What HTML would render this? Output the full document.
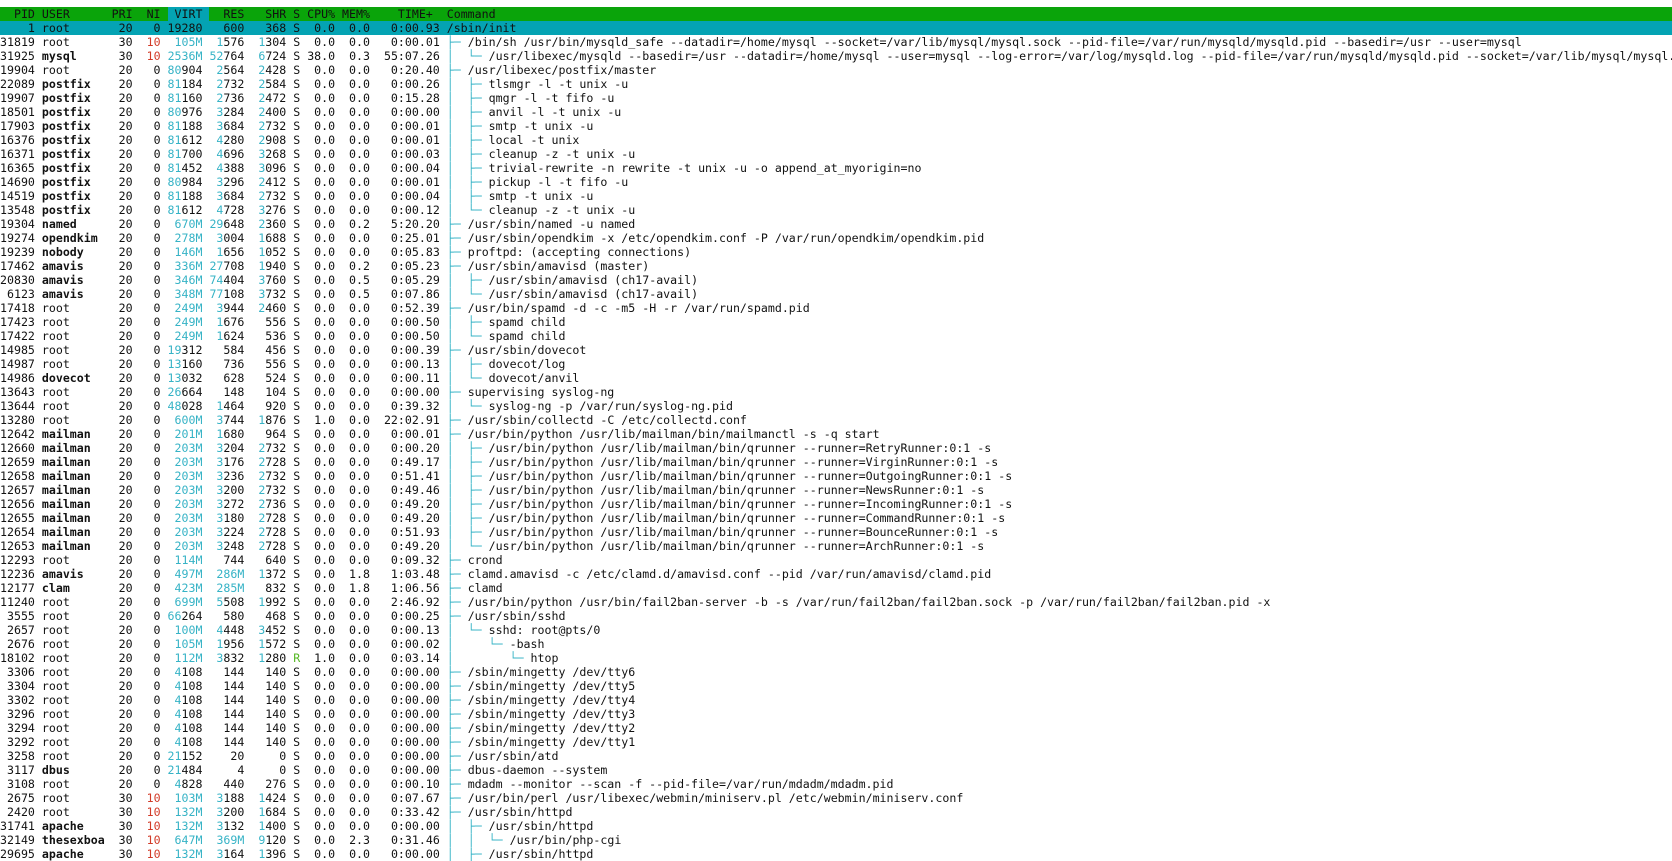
<!DOCTYPE html>
<html><head><meta charset="utf-8"><style>
html,body{margin:0;padding:0;background:#fff;width:1672px;height:853px;overflow:hidden}
#w{position:absolute;top:7px;left:0;width:1672px;font-family:"DejaVu Sans Mono","Liberation Mono",monospace;font-size:11.6px;color:#111}
#w div{height:14px;line-height:14px;white-space:pre;padding-left:0;overflow:hidden}
i{font-style:normal;color:#36b3c6}
em{font-style:normal;color:#d23b28}
.g{color:#56b824}
b{font-weight:bold}
.hd{background:#0aa40a}
.hv{background:#04a3b3}
.sel{background:#04a3b3}
</style></head><body><div id="w">
<div class="hd">  PID USER      PRI  NI <span class="hv"> VIRT </span>  RES   SHR S CPU% MEM%    TIME+  Command</div>
<div class="sel">    1 root       20   0 19280   600   368 S  0.0  0.0   0:00.93 /sbin/init</div>
<div>31819 root       30  <em>10</em>  <i>105M</i>  <i>1</i>576  <i>1</i>304 S  0.0  0.0   0:00.01 <i>├─</i> /bin/sh /usr/bin/mysqld_safe --datadir=/home/mysql --socket=/var/lib/mysql/mysql.sock --pid-file=/var/run/mysqld/mysqld.pid --basedir=/usr --user=mysql</div>
<div>31925 <b>mysql</b>      30  <em>10</em> <i>2536M</i> <i>52</i>764  <i>6</i>724 S 38.0  0.3  55:07.26 <i>│  └─</i> /usr/libexec/mysqld --basedir=/usr --datadir=/home/mysql --user=mysql --log-error=/var/log/mysqld.log --pid-file=/var/run/mysqld/mysqld.pid --socket=/var/lib/mysql/mysql.sock</div>
<div>19904 root       20   0 <i>80</i>904  <i>2</i>564  <i>2</i>428 S  0.0  0.0   0:20.40 <i>├─</i> /usr/libexec/postfix/master</div>
<div>22089 <b>postfix</b>    20   0 <i>81</i>184  <i>2</i>732  <i>2</i>584 S  0.0  0.0   0:00.26 <i>│  ├─</i> tlsmgr -l -t unix -u</div>
<div>19907 <b>postfix</b>    20   0 <i>81</i>160  <i>2</i>736  <i>2</i>472 S  0.0  0.0   0:15.28 <i>│  ├─</i> qmgr -l -t fifo -u</div>
<div>18501 <b>postfix</b>    20   0 <i>80</i>976  <i>3</i>284  <i>2</i>400 S  0.0  0.0   0:00.00 <i>│  ├─</i> anvil -l -t unix -u</div>
<div>17903 <b>postfix</b>    20   0 <i>81</i>188  <i>3</i>684  <i>2</i>732 S  0.0  0.0   0:00.01 <i>│  ├─</i> smtp -t unix -u</div>
<div>16376 <b>postfix</b>    20   0 <i>81</i>612  <i>4</i>280  <i>2</i>908 S  0.0  0.0   0:00.01 <i>│  ├─</i> local -t unix</div>
<div>16371 <b>postfix</b>    20   0 <i>81</i>700  <i>4</i>696  <i>3</i>268 S  0.0  0.0   0:00.03 <i>│  ├─</i> cleanup -z -t unix -u</div>
<div>16365 <b>postfix</b>    20   0 <i>81</i>452  <i>4</i>388  <i>3</i>096 S  0.0  0.0   0:00.04 <i>│  ├─</i> trivial-rewrite -n rewrite -t unix -u -o append_at_myorigin=no</div>
<div>14690 <b>postfix</b>    20   0 <i>80</i>984  <i>3</i>296  <i>2</i>412 S  0.0  0.0   0:00.01 <i>│  ├─</i> pickup -l -t fifo -u</div>
<div>14519 <b>postfix</b>    20   0 <i>81</i>188  <i>3</i>684  <i>2</i>732 S  0.0  0.0   0:00.04 <i>│  ├─</i> smtp -t unix -u</div>
<div>13548 <b>postfix</b>    20   0 <i>81</i>612  <i>4</i>728  <i>3</i>276 S  0.0  0.0   0:00.12 <i>│  └─</i> cleanup -z -t unix -u</div>
<div>19304 <b>named</b>      20   0  <i>670M</i> <i>29</i>648  <i>2</i>360 S  0.0  0.2   5:20.20 <i>├─</i> /usr/sbin/named -u named</div>
<div>19274 <b>opendkim</b>   20   0  <i>278M</i>  <i>3</i>004  <i>1</i>688 S  0.0  0.0   0:25.01 <i>├─</i> /usr/sbin/opendkim -x /etc/opendkim.conf -P /var/run/opendkim/opendkim.pid</div>
<div>19239 <b>nobody</b>     20   0  <i>146M</i>  <i>1</i>656  <i>1</i>052 S  0.0  0.0   0:05.83 <i>├─</i> proftpd: (accepting connections)</div>
<div>17462 <b>amavis</b>     20   0  <i>336M</i> <i>27</i>708  <i>1</i>940 S  0.0  0.2   0:05.23 <i>├─</i> /usr/sbin/amavisd (master)</div>
<div>20830 <b>amavis</b>     20   0  <i>346M</i> <i>74</i>404  <i>3</i>760 S  0.0  0.5   0:05.29 <i>│  ├─</i> /usr/sbin/amavisd (ch17-avail)</div>
<div> 6123 <b>amavis</b>     20   0  <i>348M</i> <i>77</i>108  <i>3</i>732 S  0.0  0.5   0:07.86 <i>│  └─</i> /usr/sbin/amavisd (ch17-avail)</div>
<div>17418 root       20   0  <i>249M</i>  <i>3</i>944  <i>2</i>460 S  0.0  0.0   0:52.39 <i>├─</i> /usr/bin/spamd -d -c -m5 -H -r /var/run/spamd.pid</div>
<div>17423 root       20   0  <i>249M</i>  <i>1</i>676   556 S  0.0  0.0   0:00.50 <i>│  ├─</i> spamd child</div>
<div>17422 root       20   0  <i>249M</i>  <i>1</i>624   536 S  0.0  0.0   0:00.50 <i>│  └─</i> spamd child</div>
<div>14985 root       20   0 <i>19</i>312   584   456 S  0.0  0.0   0:00.39 <i>├─</i> /usr/sbin/dovecot</div>
<div>14987 root       20   0 <i>13</i>160   736   556 S  0.0  0.0   0:00.13 <i>│  ├─</i> dovecot/log</div>
<div>14986 <b>dovecot</b>    20   0 <i>13</i>032   628   524 S  0.0  0.0   0:00.11 <i>│  └─</i> dovecot/anvil</div>
<div>13643 root       20   0 <i>26</i>664   148   104 S  0.0  0.0   0:00.00 <i>├─</i> supervising syslog-ng</div>
<div>13644 root       20   0 <i>48</i>028  <i>1</i>464   920 S  0.0  0.0   0:39.32 <i>│  └─</i> syslog-ng -p /var/run/syslog-ng.pid</div>
<div>13280 root       20   0  <i>600M</i>  <i>3</i>744  <i>1</i>876 S  1.0  0.0  22:02.91 <i>├─</i> /usr/sbin/collectd -C /etc/collectd.conf</div>
<div>12642 <b>mailman</b>    20   0  <i>201M</i>  <i>1</i>680   964 S  0.0  0.0   0:00.01 <i>├─</i> /usr/bin/python /usr/lib/mailman/bin/mailmanctl -s -q start</div>
<div>12660 <b>mailman</b>    20   0  <i>203M</i>  <i>3</i>204  <i>2</i>732 S  0.0  0.0   0:00.20 <i>│  ├─</i> /usr/bin/python /usr/lib/mailman/bin/qrunner --runner=RetryRunner:0:1 -s</div>
<div>12659 <b>mailman</b>    20   0  <i>203M</i>  <i>3</i>176  <i>2</i>728 S  0.0  0.0   0:49.17 <i>│  ├─</i> /usr/bin/python /usr/lib/mailman/bin/qrunner --runner=VirginRunner:0:1 -s</div>
<div>12658 <b>mailman</b>    20   0  <i>203M</i>  <i>3</i>236  <i>2</i>732 S  0.0  0.0   0:51.41 <i>│  ├─</i> /usr/bin/python /usr/lib/mailman/bin/qrunner --runner=OutgoingRunner:0:1 -s</div>
<div>12657 <b>mailman</b>    20   0  <i>203M</i>  <i>3</i>200  <i>2</i>732 S  0.0  0.0   0:49.46 <i>│  ├─</i> /usr/bin/python /usr/lib/mailman/bin/qrunner --runner=NewsRunner:0:1 -s</div>
<div>12656 <b>mailman</b>    20   0  <i>203M</i>  <i>3</i>272  <i>2</i>736 S  0.0  0.0   0:49.20 <i>│  ├─</i> /usr/bin/python /usr/lib/mailman/bin/qrunner --runner=IncomingRunner:0:1 -s</div>
<div>12655 <b>mailman</b>    20   0  <i>203M</i>  <i>3</i>180  <i>2</i>728 S  0.0  0.0   0:49.20 <i>│  ├─</i> /usr/bin/python /usr/lib/mailman/bin/qrunner --runner=CommandRunner:0:1 -s</div>
<div>12654 <b>mailman</b>    20   0  <i>203M</i>  <i>3</i>224  <i>2</i>728 S  0.0  0.0   0:51.93 <i>│  ├─</i> /usr/bin/python /usr/lib/mailman/bin/qrunner --runner=BounceRunner:0:1 -s</div>
<div>12653 <b>mailman</b>    20   0  <i>203M</i>  <i>3</i>248  <i>2</i>728 S  0.0  0.0   0:49.20 <i>│  └─</i> /usr/bin/python /usr/lib/mailman/bin/qrunner --runner=ArchRunner:0:1 -s</div>
<div>12293 root       20   0  <i>114M</i>   744   640 S  0.0  0.0   0:09.32 <i>├─</i> crond</div>
<div>12236 <b>amavis</b>     20   0  <i>497M</i>  <i>286M</i>  <i>1</i>372 S  0.0  1.8   1:03.48 <i>├─</i> clamd.amavisd -c /etc/clamd.d/amavisd.conf --pid /var/run/amavisd/clamd.pid</div>
<div>12177 <b>clam</b>       20   0  <i>423M</i>  <i>285M</i>   832 S  0.0  1.8   1:06.56 <i>├─</i> clamd</div>
<div>11240 root       20   0  <i>699M</i>  <i>5</i>508  <i>1</i>992 S  0.0  0.0   2:46.92 <i>├─</i> /usr/bin/python /usr/bin/fail2ban-server -b -s /var/run/fail2ban/fail2ban.sock -p /var/run/fail2ban/fail2ban.pid -x</div>
<div> 3555 root       20   0 <i>66</i>264   580   468 S  0.0  0.0   0:00.25 <i>├─</i> /usr/sbin/sshd</div>
<div> 2657 root       20   0  <i>100M</i>  <i>4</i>448  <i>3</i>452 S  0.0  0.0   0:00.13 <i>│  └─</i> sshd: root@pts/0</div>
<div> 2676 root       20   0  <i>105M</i>  <i>1</i>956  <i>1</i>572 S  0.0  0.0   0:00.02 <i>│     └─</i> -bash</div>
<div>18102 root       20   0  <i>112M</i>  <i>3</i>832  <i>1</i>280 <span class="g">R</span>  1.0  0.0   0:03.14 <i>│        └─</i> htop</div>
<div> 3306 root       20   0  <i>4</i>108   144   140 S  0.0  0.0   0:00.00 <i>├─</i> /sbin/mingetty /dev/tty6</div>
<div> 3304 root       20   0  <i>4</i>108   144   140 S  0.0  0.0   0:00.00 <i>├─</i> /sbin/mingetty /dev/tty5</div>
<div> 3302 root       20   0  <i>4</i>108   144   140 S  0.0  0.0   0:00.00 <i>├─</i> /sbin/mingetty /dev/tty4</div>
<div> 3296 root       20   0  <i>4</i>108   144   140 S  0.0  0.0   0:00.00 <i>├─</i> /sbin/mingetty /dev/tty3</div>
<div> 3294 root       20   0  <i>4</i>108   144   140 S  0.0  0.0   0:00.00 <i>├─</i> /sbin/mingetty /dev/tty2</div>
<div> 3292 root       20   0  <i>4</i>108   144   140 S  0.0  0.0   0:00.00 <i>├─</i> /sbin/mingetty /dev/tty1</div>
<div> 3258 root       20   0 <i>21</i>152    20     0 S  0.0  0.0   0:00.00 <i>├─</i> /usr/sbin/atd</div>
<div> 3117 <b>dbus</b>       20   0 <i>21</i>484     4     0 S  0.0  0.0   0:00.00 <i>├─</i> dbus-daemon --system</div>
<div> 3108 root       20   0  <i>4</i>828   440   276 S  0.0  0.0   0:00.10 <i>├─</i> mdadm --monitor --scan -f --pid-file=/var/run/mdadm/mdadm.pid</div>
<div> 2675 root       30  <em>10</em>  <i>103M</i>  <i>3</i>188  <i>1</i>424 S  0.0  0.0   0:07.67 <i>├─</i> /usr/bin/perl /usr/libexec/webmin/miniserv.pl /etc/webmin/miniserv.conf</div>
<div> 2420 root       30  <em>10</em>  <i>132M</i>  <i>3</i>200  <i>1</i>684 S  0.0  0.0   0:33.42 <i>├─</i> /usr/sbin/httpd</div>
<div>31741 <b>apache</b>     30  <em>10</em>  <i>132M</i>  <i>3</i>132  <i>1</i>400 S  0.0  0.0   0:00.00 <i>│  ├─</i> /usr/sbin/httpd</div>
<div>32149 <b>thesexboa</b>  30  <em>10</em>  <i>647M</i>  <i>369M</i>  <i>9</i>120 S  0.0  2.3   0:31.46 <i>│  │  └─</i> /usr/bin/php-cgi</div>
<div>29695 <b>apache</b>     30  <em>10</em>  <i>132M</i>  <i>3</i>164  <i>1</i>396 S  0.0  0.0   0:00.00 <i>│  ├─</i> /usr/sbin/httpd</div>
</div></body></html>
